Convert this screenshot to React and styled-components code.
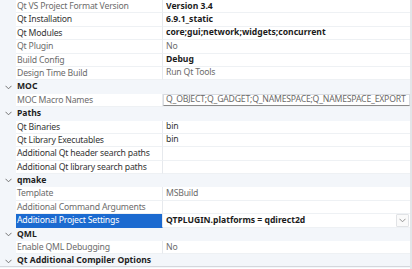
import { createGlobalStyle, styled } from 'styled-components';

const Global = createGlobalStyle`
	html, body {
		margin: 0;
		padding: 0;
		background: #ffffff;
	}
	body {
		font-family: 'Noto Sans', 'Open Sans', sans-serif;
		font-size: 8.7px;
		letter-spacing: -0.2px;
	}
`;

const Grid = styled.div`
	width: 412px;
	height: 269px;
	overflow: hidden;
	display: flex;
	flex-direction: column;
	position: relative;
	border-right: 2px solid #e3e5e8;
	box-sizing: border-box;
	&:after {
		content: '';
		position: absolute;
		left: 0;
		right: 0;
		bottom: 2px;
		height: 1px;
		background: #d4d7dc;
	}
`;

const Row = styled.div`
	display: flex;
	height: 13.4px;
	flex: none;
	align-items: stretch;
	line-height: 13.4px;
	white-space: nowrap;
`;

const Gutter = styled.div`
	width: 16px;
	flex: none;
	background: #f3f6fa;
	display: flex;
	align-items: center;
	justify-content: center;
`;

const SectionTitle = styled.div`
	flex: 1;
	background: #f3f6fa;
	font-weight: 700;
	font-size: 8.6px;
	letter-spacing: 0;
	color: #1e1e1e;
	padding-left: 1px;
`;

const Name = styled.div`
	width: 147px;
	flex: none;
	box-sizing: border-box;
	padding-left: 1px;
	color: ${(p) => (p.$selected ? '#ffffff' : p.$dim ? '#6c6c6c' : '#353535')};
	background: ${(p) => (p.$selected ? '#1b6ad0' : '#ffffff')};
	border-bottom: 1px solid ${(p) => (p.$selected ? '#1b6ad0' : '#eef1f4')};
	border-right: 1px solid #e6e9ed;
	overflow: hidden;
`;

const Value = styled.div`
	flex: 1;
	min-width: 0;
	box-sizing: border-box;
	padding-left: 3px;
	font-weight: ${(p) => (p.$bold ? 700 : 400)};
	font-size: ${(p) => (p.$bold ? '8.6px' : '8.7px')};
	letter-spacing: ${(p) => (p.$bold ? '0' : '-0.2px')};
	color: ${(p) => (p.$bold ? '#1b1b1b' : p.$dim ? '#6c6c6c' : '#353535')};
	border-bottom: 1px solid #eef1f4;
	overflow: hidden;
	display: flex;
	align-items: center;
`;

const EditBox = styled.div`
	flex: 1;
	height: 100%;
	box-sizing: border-box;
	margin-left: -3px;
	padding-left: 2px;
	border: 1px solid #d8dbe0;
	border-bottom: 1px solid #8a8a8a;
	color: #6a6a6a;
	letter-spacing: -0.22px;
	overflow: hidden;
	line-height: 11px;
	display: flex;
	align-items: center;
`;

const ValueText = styled.span`
	flex: 1;
	overflow: hidden;
`;

const DropButton = styled.div`
	width: 11px;
	height: 11px;
	flex: none;
	margin-right: 1px;
	border: 1px solid #e1e3e6;
	border-radius: 1px;
	background: #fafafa;
	display: flex;
	align-items: center;
	justify-content: center;
`;

const Chevron = ({ color = '#555' }) => (
	<svg width='7' height='5' viewBox='0 0 7 5'>
		<path d='M0.5 0.8 L3.5 3.8 L6.5 0.8' fill='none' stroke={color} strokeWidth='0.9' />
	</svg>
);

const rows = [
	{ name: 'Qt VS Project Format Version', value: 'Version 3.4', bold: true, dim: true },
	{ name: 'Qt Installation', value: '6.9.1_static', bold: true },
	{ name: 'Qt Modules', value: 'core;gui;network;widgets;concurrent', bold: true },
	{ name: 'Qt Plugin', value: 'No', dim: true },
	{ name: 'Build Config', value: 'Debug', bold: true, dim: true },
	{ name: 'Design Time Build', value: 'Run Qt Tools', dim: true },
	{ section: 'MOC' },
	{ name: 'MOC Macro Names', value: 'Q_OBJECT;Q_GADGET;Q_NAMESPACE;Q_NAMESPACE_EXPORT', edit: true, dim: true },
	{ section: 'Paths' },
	{ name: 'Qt Binaries', value: 'bin' },
	{ name: 'Qt Library Executables', value: 'bin' },
	{ name: 'Additional Qt header search paths', value: '' },
	{ name: 'Additional Qt library search paths', value: '' },
	{ section: 'qmake' },
	{ name: 'Template', value: 'MSBuild', dim: true },
	{ name: 'Additional Command Arguments', value: '', dim: true },
	{ name: 'Additional Project Settings', value: 'QTPLUGIN.platforms = qdirect2d', bold: true, selected: true },
	{ section: 'QML' },
	{ name: 'Enable QML Debugging', value: 'No', dim: true },
	{ section: 'Qt Additional Compiler Options' },
];

const App = () => (
	<>
		<Global />
		<Grid>
			{rows.map((r, i) =>
				r.section ? (
					<Row key={i}>
						<Gutter>
							<Chevron color='#666' />
						</Gutter>
						<SectionTitle>{r.section}</SectionTitle>
					</Row>
				) : (
					<Row key={i}>
						<Gutter />
						<Name $selected={r.selected} $dim={r.dim}>
							{r.name}
						</Name>
						<Value $bold={r.bold} $dim={r.dim}>
							{r.edit ? (
								<EditBox>{r.value}</EditBox>
							) : (
								<ValueText>{r.value}</ValueText>
							)}
							{r.selected && (
								<DropButton>
									<Chevron color='#888' />
								</DropButton>
							)}
						</Value>
					</Row>
				)
			)}
		</Grid>
	</>
);

export default App;
